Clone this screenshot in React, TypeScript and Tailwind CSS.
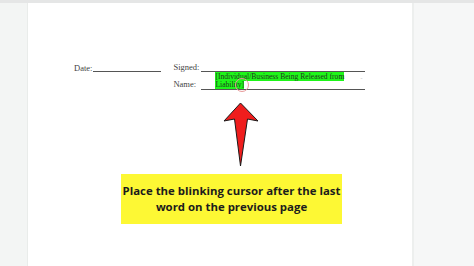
export default function App() {
  return (
    <div className="w-[474px] h-[266px] flex flex-col bg-[#f4f6f5] overflow-hidden">
      <div className="h-[3px] bg-[#e5e6e6]" />
      <div className="flex flex-1">
        {/* left gutter */}
        <div className="w-[28px] bg-[#f3f5f4] border-r border-[#e9ecea]" />
        {/* document page */}
        <div className="relative flex-1 bg-white pt-[58px] font-['Liberation_Serif',serif] text-[#444]">
          <div className="flex">
            <div className="ml-[46px] flex items-end h-[11px]">
              <span className="text-[8.5px] leading-none">Date:</span>
              <div className="ml-[1px] w-[68px] border-b border-[#555]" />
            </div>
            <div className="ml-[12px] grid grid-cols-[28px_164px]">
              <span className="text-[8.5px] leading-none self-end h-[11px] pt-[2px]">Signed:</span>
              <div className="h-[11px] border-b border-[#555]" />
              <span className="text-[8.5px] leading-none self-end pb-[2px]">Name:</span>
              <div className="relative h-[18px] border-b border-[#555] pl-[14px] pt-[1px]">
                <div className="w-[140px] text-[7.6px] leading-[8px] text-[#1f3a1f]">
                  <span className="bg-[#1ef51a] [box-decoration-break:clone]">
                    [Individual/Business Being Released from Liability]
                  </span>
                </div>
                <span className="absolute right-[3px] top-[2px] text-[6px] text-[#bbb]">-</span>
                {/* cursor halo */}
                <div className="absolute left-[34px] top-[6px] w-[14px] h-[14px] rounded-full border border-[#e89a9a]" />
              </div>
            </div>
          </div>

          <svg className="ml-[194px] mt-[12px]" width="38" height="66" viewBox="0 0 38 66">
            <path
              d="M18.5 1 L36 19 L25.5 17 L18.5 64 L12.5 17 L2 19 Z"
              fill="#ef1d1d"
              stroke="#1a1a1a"
              strokeWidth="1"
              strokeLinejoin="round"
            />
          </svg>

          <div className="ml-[93px] mt-[6px] w-[221px] h-[50px] bg-[#fdf834] flex items-center justify-center">
            <p className="whitespace-nowrap text-center font-['Open_Sans',sans-serif] font-bold text-[11.4px] leading-[16px] text-[#1c1c1c]">
              Place the blinking cursor after the last
              <br />
              word on the previous page
            </p>
          </div>
        </div>
        {/* right gutter */}
        <div className="w-[62px] bg-[#f6f7f7] border-l-2 border-[#edefee]" />
      </div>
    </div>
  );
}
